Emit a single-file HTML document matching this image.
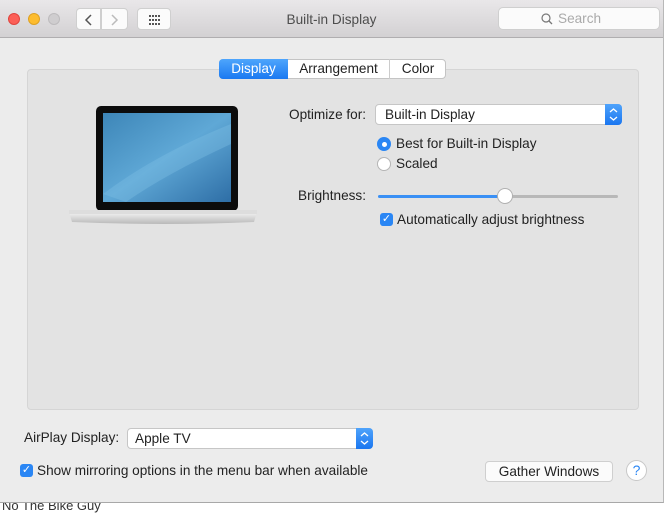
<!DOCTYPE html><html><head><style>
body{margin:0;width:666px;height:504px;background:#fff;overflow:hidden;font-family:"Liberation Sans",sans-serif;font-size:13.6px;color:#222;position:relative}
.win{position:absolute;left:0;top:0;width:663px;height:502px;background:#ececec;border-right:1px solid #b8b8b8;border-bottom:1px solid #a8a8a8;overflow:hidden;z-index:2}
.tb{position:absolute;left:0;top:0;width:663px;height:37px;background:linear-gradient(#e9e7e9,#d3d1d3);border-bottom:1px solid #b0aeb0}
.dot{position:absolute;top:13px;width:12px;height:12px;border-radius:50%}
.btn{position:absolute;background:#fbfbfb;border:1px solid #cfcfcf;border-radius:4px;box-sizing:border-box}
.a{position:absolute;white-space:nowrap}
.box{position:absolute;left:27px;top:69px;width:612px;height:341px;background:#e3e3e3;border:1px solid #d5d5d5;border-radius:4px;box-sizing:border-box}
.pop{position:absolute;background:#fff;border:1px solid #c6c6c6;border-radius:4px;box-sizing:border-box}
.arr{position:absolute;right:-1px;top:-1px;bottom:-1px;width:17px;background:linear-gradient(#4fa3fb,#1a76f0);border-radius:0 4px 4px 0}
.cb{position:absolute;width:13px;height:13px;background:#2a86f4;border-radius:3px;color:#fff;font-size:11px;line-height:13px;text-align:center}
</style></head><body>
<div class="win">
<div class="tb">
<div class="dot" style="left:8px;background:#fc5f57;border:1px solid #e0443e;box-sizing:border-box"></div>
<div class="dot" style="left:28px;background:#fdbc2e;border:1px solid #dea123;box-sizing:border-box"></div>
<div class="dot" style="left:48px;background:#cfcdcf;border:1px solid #bdbbbd;box-sizing:border-box"></div>
<div class="btn" style="left:76px;top:8px;width:25px;height:22px;border-radius:4px 0 0 4px"><svg width="25" height="22"><path d="M14 6 L9 11 L14 16" stroke="#555" stroke-width="1.5" fill="none"/></svg></div>
<div class="btn" style="left:101px;top:8px;width:27px;height:22px;border-radius:0 4px 4px 0"><svg width="25" height="22"><path d="M10 6 L15 11 L10 16" stroke="#bbb" stroke-width="1.5" fill="none"/></svg></div>
<div class="btn" style="left:137px;top:8px;width:34px;height:22px"><svg width="34" height="22"><g fill="#555"><rect x="11" y="6" width="2" height="2"/><rect x="14" y="6" width="2" height="2"/><rect x="17" y="6" width="2" height="2"/><rect x="20" y="6" width="2" height="2"/><rect x="11" y="10" width="2" height="2"/><rect x="14" y="10" width="2" height="2"/><rect x="17" y="10" width="2" height="2"/><rect x="20" y="10" width="2" height="2"/><rect x="11" y="14" width="2" height="2"/><rect x="14" y="14" width="2" height="2"/><rect x="17" y="14" width="2" height="2"/><rect x="20" y="14" width="2" height="2"/></g></svg></div>
<div class="a" style="left:0;width:663px;text-align:center;top:12px;color:#4d4d4d">Built-in Display</div>
<div class="btn" style="left:498px;top:7px;width:162px;height:23px;border-radius:5px"><svg style="position:absolute;left:42px;top:5px" width="12" height="12"><circle cx="5" cy="5" r="4" stroke="#777" stroke-width="1.2" fill="none"/><path d="M8 8 L11 11" stroke="#777" stroke-width="1.3"/></svg><span class="a" style="left:59px;top:3px;color:#aaa">Search</span></div>
</div>
<div class="box"></div>
<div style="position:absolute;left:219px;top:59px;width:227px;height:20px;background:#fff;border:1px solid #c4c4c4;border-radius:4px;box-sizing:border-box"></div>
<div style="position:absolute;left:219px;top:59px;width:69px;height:20px;background:linear-gradient(#4ea5fc,#1a79f1);border-radius:4px 0 0 4px;color:#fff;text-align:center;line-height:20px">Display</div>
<div class="a" style="left:288px;top:59px;width:101px;height:20px;line-height:20px;text-align:center;border-right:1px solid #ccc">Arrangement</div>
<div class="a" style="left:390px;top:59px;width:56px;line-height:20px;text-align:center">Color</div>
<svg style="position:absolute;left:66px;top:104px" width="194" height="122">
<defs><linearGradient id="s" x1="0" y1="0" x2="1" y2="1"><stop offset="0" stop-color="#3d86b8"/><stop offset=".5" stop-color="#5fa8d6"/><stop offset="1" stop-color="#2e6ea6"/></linearGradient><linearGradient id="b" x1="0" y1="0" x2="0" y2="1"><stop offset="0" stop-color="#f4f4f4"/><stop offset="1" stop-color="#b9b9b9"/></linearGradient></defs>
<rect x="30" y="2" width="142" height="105" rx="5" fill="#0c0c0c"/>
<rect x="37" y="9" width="128" height="89" fill="url(#s)"/>
<path d="M37 90 Q90 50 165 20 L165 40 Q100 70 60 98Z" fill="#7dbfe3" opacity=".4"/>
<path d="M3 108 L191 108 L188 118 Q100 122 6 118Z" fill="url(#b)"/>
<rect x="3" y="106" width="188" height="4" fill="#ddd"/>
</svg>
<div class="a" style="left:289px;top:107px">Optimize for:</div>
<div class="pop" style="left:375px;top:104px;width:247px;height:21px"><span class="a" style="left:9px;top:2px">Built-in Display</span><div class="arr"><svg width="17" height="21"><path d="M5 8 L8.5 5 L12 8 M5 13 L8.5 16 L12 13" stroke="#fff" stroke-width="1.3" fill="none"/></svg></div></div>
<div style="position:absolute;left:377px;top:137px;width:14px;height:14px;border-radius:50%;background:#2a86f4"><div style="position:absolute;left:5px;top:5px;width:5px;height:5px;border-radius:50%;background:#fff"></div></div>
<div class="a" style="left:396px;top:136px">Best for Built-in Display</div>
<div style="position:absolute;left:377px;top:157px;width:14px;height:14px;border-radius:50%;background:#fff;border:1px solid #b5b5b5;box-sizing:border-box"></div>
<div class="a" style="left:396px;top:156px">Scaled</div>
<div class="a" style="left:298px;top:188px">Brightness:</div>
<div style="position:absolute;left:378px;top:195px;width:128px;height:3px;background:#3a90f5;border-radius:2px"></div>
<div style="position:absolute;left:506px;top:195px;width:112px;height:3px;background:#b8b8b8;border-radius:2px"></div>
<div style="position:absolute;left:497px;top:188px;width:16px;height:16px;border-radius:50%;background:#fff;border:1px solid #b0b0b0;box-sizing:border-box"></div>
<div class="cb" style="left:380px;top:213px">✓</div>
<div class="a" style="left:397px;top:212px">Automatically adjust brightness</div>
<div class="a" style="left:24px;top:430px">AirPlay Display:</div>
<div class="pop" style="left:127px;top:428px;width:246px;height:21px"><span class="a" style="left:7px;top:2px">Apple TV</span><div class="arr"><svg width="17" height="21"><path d="M5 8 L8.5 5 L12 8 M5 13 L8.5 16 L12 13" stroke="#fff" stroke-width="1.3" fill="none"/></svg></div></div>
<div class="cb" style="left:20px;top:464px">✓</div>
<div class="a" style="left:37px;top:463px">Show mirroring options in the menu bar when available</div>
<div class="btn" style="left:485px;top:461px;width:128px;height:21px;border-radius:4px;text-align:center;line-height:19px">Gather Windows</div>
<div style="position:absolute;left:626px;top:460px;width:21px;height:21px;border-radius:50%;background:#fff;border:1px solid #c8c8c8;box-sizing:border-box;color:#2a86f4;text-align:center;line-height:19px;font-size:14px">?</div>
</div>
<div class="a" style="left:2px;top:498px;font-size:13px;color:#333;z-index:1">No The Bike Guy</div>
</body></html>
